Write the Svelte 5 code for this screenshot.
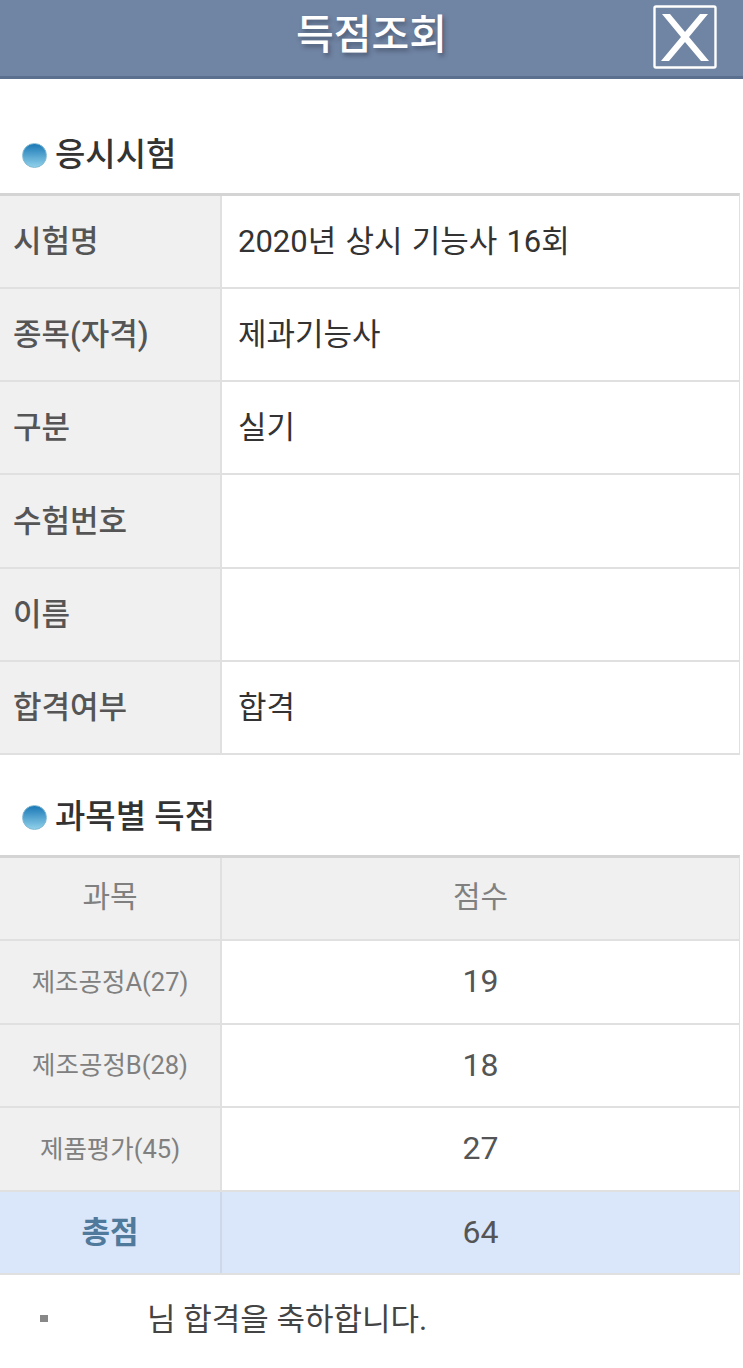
<script>
	const examInfo = [
		{ label: '시험명', value: '2020년 상시 기능사 16회' },
		{ label: '종목(자격)', value: '제과기능사' },
		{ label: '구분', value: '실기' },
		{ label: '수험번호', value: '' },
		{ label: '이름', value: '' },
		{ label: '합격여부', value: '합격' }
	];

	const scores = [
		{ name: '제조공정A(27)', score: 19 },
		{ name: '제조공정B(28)', score: 18 },
		{ name: '제품평가(45)', score: 27 }
	];
</script>

<div class="page">
	<header>
		<h1>득점조회</h1>
		<button class="close" aria-label="닫기">
			<svg viewBox="0 0 64 64" width="64" height="64" aria-hidden="true">
				<rect x="1.5" y="1.5" width="61" height="61" rx="1.5" fill="none" stroke="#fff" stroke-width="2.4" />
				<path d="M9 9 L17 9 L32 27 L47 9 L55 9 L36 32 L56 56 L48 56 L32 37 L16 56 L8 56 L28 32 Z" fill="#fff" />
			</svg>
		</button>
	</header>

	<h2 class="title first"><span class="dot"></span>응시시험</h2>
	<div class="info">
		{#each examInfo as row}
			<div class="info-row">
				<div class="label">{row.label}</div>
				<div class="value">{row.value}</div>
			</div>
		{/each}
	</div>

	<h2 class="title second"><span class="dot"></span>과목별 득점</h2>
	<div class="scores">
		<div class="score-row head">
			<div class="name">과목</div>
			<div class="num">점수</div>
		</div>
		{#each scores as row}
			<div class="score-row">
				<div class="name small">{row.name}</div>
				<div class="num">{row.score}</div>
			</div>
		{/each}
		<div class="score-row total">
			<div class="name">총점</div>
			<div class="num">64</div>
		</div>
	</div>

	<p class="message"><span class="mark"></span><span class="msg-text">님 합격을 축하합니다.</span></p>
</div>

<style>
	:global(body) {
		background: #fff;
	}
	.page {
		width: 743px;
		height: 1368px;
		overflow: hidden;
		font-family: 'Roboto', 'Noto Sans CJK KR', sans-serif;
		color: #3a3a3a;
	}
	header {
		height: 76px;
		border-bottom: 3px solid #5b6f8e;
		background: #7084a3;
		position: relative;
		display: flex;
		align-items: center;
		justify-content: center;
	}
	h1 {
		margin: 0 0 14px;
		font-size: 41px;
		font-weight: 500;
		color: #fff;
		text-shadow: 2px 3px 4px rgba(50, 60, 80, 0.55);
	}
	.close {
		position: absolute;
		top: 5px;
		right: 26px;
		width: 64px;
		height: 64px;
		padding: 0;
		border: none;
		background: none;
	}
	.close svg {
		display: block;
	}
	.title {
		margin: 0;
		display: flex;
		align-items: center;
		gap: 8px;
		padding-left: 22px;
		font-size: 33px;
		font-weight: 500;
		color: #333;
		line-height: 40px;
	}
	.title.first {
		padding-top: 56px;
		padding-bottom: 17.5px;
	}
	.title.second {
		padding-top: 42px;
		padding-bottom: 17.5px;
	}
	.dot {
		width: 25px;
		height: 25px;
		border-radius: 50%;
		background: linear-gradient(#1a78b6, #8fd0ea);
		border: 1px solid #7fb9d2;
		box-sizing: border-box;
	}
	.info,
	.scores {
		width: 740px;
		border-top: 3px solid #d4d4d4;
		border-right: 1px solid #e0e0e0;
		box-sizing: border-box;
	}
	.info-row {
		height: 93.33px;
		box-sizing: border-box;
		display: grid;
		grid-template-columns: 222px 1fr;
		border-bottom: 2px solid #e0e0e0;
	}
	.label {
		background: #f0f0f0;
		border-right: 2px solid #e0e0e0;
		padding: 0 0 6px 13px;
		display: flex;
		align-items: center;
		font-size: 31px;
		font-weight: 500;
		color: #555;
	}
	.value {
		padding: 0 0 6px 16px;
		display: flex;
		align-items: center;
		font-size: 31px;
		word-spacing: 1.5px;
		color: #333;
	}
	.score-row {
		height: 83.5px;
		box-sizing: border-box;
		display: grid;
		grid-template-columns: 222px 1fr;
		border-bottom: 2px solid #e0e0e0;
	}
	.name {
		background: #f0f0f0;
		border-right: 2px solid #e0e0e0;
		padding-bottom: 6px;
		display: flex;
		align-items: center;
		justify-content: center;
		font-size: 31px;
		color: #808080;
	}
	.name.small {
		font-size: 25.5px;
	}
	.num {
		padding-bottom: 2px;
		display: flex;
		align-items: center;
		justify-content: center;
		font-size: 32px;
		color: #555;
	}
	.head .num {
		background: #f0f0f0;
		padding-bottom: 10px;
		font-size: 30px;
		color: #808080;
	}
	.head .name {
		padding-bottom: 10px;
		font-size: 30px;
	}
	.total .name,
	.total .num {
		background: #dae6f9;
	}
	.total .name {
		border-right-color: #ced8e8;
		font-weight: 700;
		color: #4f7a9c;
	}
	.message {
		margin: 0;
		height: 87px;
		position: relative;
		display: flex;
		align-items: center;
		font-size: 31px;
		color: #444;
	}
	.mark {
		position: absolute;
		left: 40px;
		top: 40px;
		width: 8px;
		height: 7px;
		background: #888;
	}
	.msg-text {
		margin-left: 147px;
		padding-bottom: 5px;
	}
</style>
